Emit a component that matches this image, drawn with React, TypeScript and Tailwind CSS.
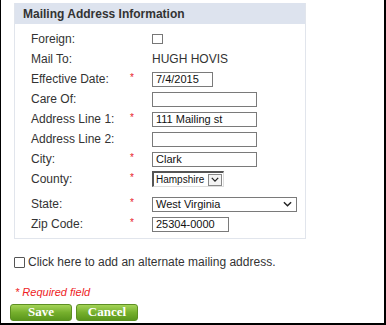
import React from "react";

const font = { fontFamily: '"Liberation Sans", Arial, sans-serif' };

function Chevron({ className = "" }: { className?: string }) {
  return (
    <svg viewBox="0 0 10 6" className={className} fill="none" stroke="#222" strokeWidth="1.6">
      <path d="M1 1 L5 5 L9 1" />
    </svg>
  );
}

function Row({
  label,
  required,
  children,
  className = "",
}: {
  label: string;
  required?: boolean;
  children: React.ReactNode;
  className?: string;
}) {
  return (
    <div className={`flex h-[20px] items-center ${className}`}>
      <span className="w-[99px] text-[12px] text-[#333]">{label}</span>
      <span className="-mt-[3px] w-[22px] text-[10px] leading-none text-[#e8202a]">{required ? "*" : ""}</span>
      {children}
    </div>
  );
}

function TextBox({ value, width }: { value?: string; width: string }) {
  return (
    <div
      className={`${width} flex h-[15px] items-center border border-[#7a7a7a] bg-white px-[3px] text-[11px] text-[#111]`}
    >
      {value}
    </div>
  );
}

export default function App() {
  return (
    <div
      style={font}
      className="h-[325px] w-[386px] overflow-hidden border-b-2 border-l border-r-2 border-black bg-white"
    >
      <div className="ml-[13px] mt-[3px] w-[292px] border border-t-0 border-[#e1e5ec]">
        <div className="flex h-[21px] items-center bg-[#dde3ee] pl-[8px] text-[12px] font-bold text-[#333]">
          Mailing Address Information
        </div>
        <div className="pb-[4px] pl-[16px] pt-[5px]">
          <Row label="Foreign:">
            <div className="h-[10px] w-[11px] border border-[#777] bg-white" />
          </Row>
          <Row label="Mail To:">
            <span className="text-[12px] text-[#333]">HUGH HOVIS</span>
          </Row>
          <Row label="Effective Date:" required>
            <TextBox value="7/4/2015" width="w-[61px]" />
          </Row>
          <Row label="Care Of:">
            <TextBox width="w-[105px]" />
          </Row>
          <Row label="Address Line 1:" required>
            <TextBox value="111 Mailing st" width="w-[105px]" />
          </Row>
          <Row label="Address Line 2:">
            <TextBox width="w-[105px]" />
          </Row>
          <Row label="City:" required>
            <TextBox value="Clark" width="w-[105px]" />
          </Row>
          <Row label="County:" required>
            <div className="flex h-[16px] w-[72px] items-center border-b border-l-2 border-r border-t-2 border-b-[#ddd] border-l-[#555] border-r-[#ddd] border-t-[#555] bg-white text-[10px] text-[#111]">
              <span className="flex-1 whitespace-nowrap pl-[2px]">Hampshire</span>
              <span className="ml-[1px] mr-[1px] flex h-[12px] w-[14px] shrink-0 items-center justify-center border border-[#888] bg-[#f4f4f4]">
                <Chevron className="h-[5px] w-[8px]" />
              </span>
            </div>
          </Row>
          <Row label="State:" required className="mt-[5px]">
            <div className="flex h-[15px] w-[145px] items-center border border-[#7a7a7a] bg-white pl-[3px] text-[11px] text-[#111]">
              <span className="flex-1">West Virginia</span>
              <Chevron className="mr-[4px] h-[6px] w-[9px]" />
            </div>
          </Row>
          <Row label="Zip Code:" required>
            <TextBox value="25304-0000" width="w-[77px]" />
          </Row>
        </div>
      </div>

      <div className="ml-[13px] mt-[14px] flex items-center">
        <div className="h-[11px] w-[11px] rounded-[1px] border border-[#555] bg-white" />
        <span className="ml-[3px] text-[12px] text-[#333]">Click here to add an alternate mailing address.</span>
      </div>

      <div className="ml-[14px] mt-[13px] text-[11px] italic text-[#ee1c25]">* Required field</div>

      <div className="ml-[9px] mt-[3px] flex gap-[4px]">
        {["Save", "Cancel"].map((t) => (
          <button
            key={t}
            className="flex h-[17px] w-[62px] items-center justify-center rounded-[3px] border border-[#5d8f22] bg-gradient-to-b from-[#a4d457] via-[#76b02d] to-[#5a961c] text-[13px] font-bold text-white"
            style={{ fontFamily: '"Liberation Serif", "Times New Roman", serif' }}
          >
            {t}
          </button>
        ))}
      </div>
    </div>
  );
}
